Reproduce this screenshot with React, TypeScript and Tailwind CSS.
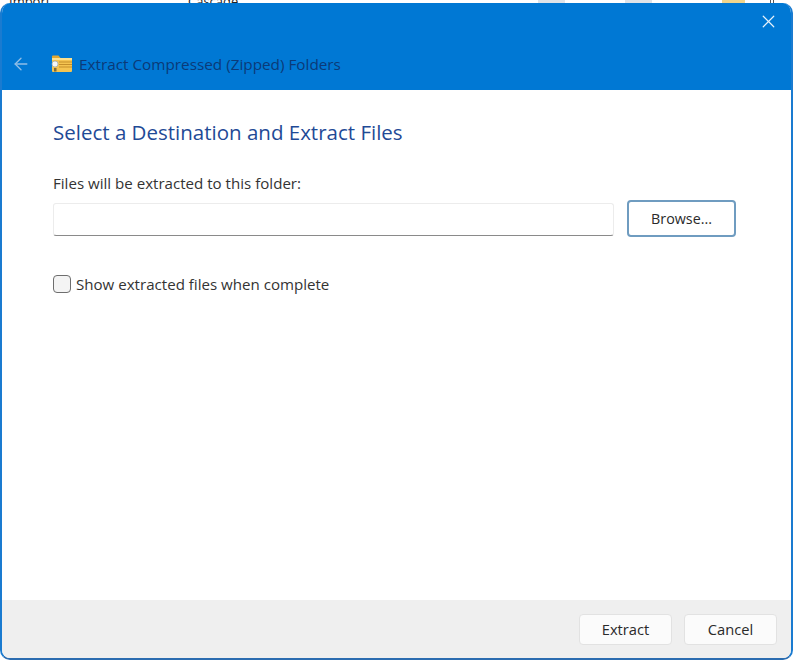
import { X, ArrowLeft } from 'lucide-react';

function ZipFolderIcon() {
  return (
    <svg width="22" height="20" viewBox="0 0 22 20" className="shrink-0">
      <path d="M1 2.5 Q1 1.5 2 1.5 H7.5 L9.5 4 H1 Z" fill="#e3a72f" />
      <rect x="1" y="4" width="20" height="14" rx="1" fill="#f5c451" />
      <rect x="1" y="4" width="20" height="2" fill="#fbe08f" />
      <path d="M8 8 H21 M8 10.5 H21 M8 13 H21" stroke="#c58f2a" strokeWidth="1" />
      <circle cx="4" cy="10" r="3" fill="#f4f6f8" stroke="#9aa3ab" strokeWidth="0.7" />
      <rect x="3" y="14" width="2.5" height="3.5" fill="#7d6a3a" />
    </svg>
  );
}

function FooterButton({ label }: { label: string }) {
  return (
    <button className="h-[31px] w-[93px] rounded-[4px] border border-[#e2e2e2] bg-[#fbfbfb] text-[14.7px] text-[#2a2a2a]">
      {label}
    </button>
  );
}

export default function App() {
  return (
    <div className="h-[661px] w-[794px] overflow-hidden bg-white font-['Open_Sans',sans-serif]">
      {/* window behind the dialog, only its bottom edge shows */}
      <div className="flex h-[3px] items-end overflow-hidden bg-white">
        <span className="ml-[9px] w-[179px] shrink-0 text-[13px] leading-[3px] text-[#222]">Import</span>
        <span className="w-[350px] shrink-0 text-[13px] leading-[3px] text-[#222]">Cascade</span>
        <div className="h-[3px] w-[27px] shrink-0 bg-[#dfe3e8]" />
        <div className="ml-[60px] h-[3px] w-[27px] shrink-0 bg-[#dfe3e8]" />
        <div className="ml-[70px] h-[3px] w-[23px] shrink-0 bg-[#f0d58c]" />
        <div className="ml-[25px] h-[3px] w-[1px] shrink-0 bg-[#555]" />
        <div className="ml-[2px] h-[3px] w-[1px] shrink-0 bg-[#555]" />
      </div>

      <div className="flex h-[657px] w-[793px] flex-col overflow-hidden rounded-[10px] border-x-2 border-b-2 border-x-[#1a7bd0] border-b-[#2b6cb0] bg-white">
        <div className="flex h-[87px] shrink-0 flex-col bg-[#0078d4] pr-[12px]">
          <div className="flex h-[50px] items-start justify-end pt-[8px]">
            <X className="text-[#e6f2fb]" size={21} strokeWidth={1.4} />
          </div>
          <div className="flex items-center pl-[9px]">
            <ArrowLeft className="text-[#8fbde6]" size={20} strokeWidth={1.6} />
            <div className="ml-[20px]">
              <ZipFolderIcon />
            </div>
            <span className="ml-[6px] text-[15.3px] text-[#0b3a78]">Extract Compressed (Zipped) Folders</span>
          </div>
        </div>

        <div className="flex flex-1 flex-col pl-[51px] pr-[55px]">
          <h1 className="mt-[27px] text-[20.5px] leading-[30px] text-[#1f4a96]">Select a Destination and Extract Files</h1>
          <label className="mt-[26px] text-[15.1px] leading-[20px] text-[#333]">Files will be extracted to this folder:</label>
          <div className="mt-[7px] flex items-center justify-between">
            <input className="mt-[2px] h-[33px] w-[561px] rounded-[3px] border border-[#ececec] border-b-[#8a8a8a] bg-white" />
            <button className="h-[37px] w-[109px] rounded-[4px] border-2 border-[#6f9cc0] bg-white text-[14.3px] text-[#2a2a2a]">
              Browse...
            </button>
          </div>
          <label className="mt-[36px] flex items-center gap-[5px] text-[15.1px] text-[#333]">
            <span className="h-[18px] w-[18px] rounded-[4px] border border-[#6e6e6e] bg-[#f4f4f4]" />
            Show extracted files when complete
          </label>
        </div>

        <div className="flex h-[58px] shrink-0 items-start justify-end gap-[12px] bg-[#efefef] pr-[14px] pt-[14px]">
          <FooterButton label="Extract" />
          <FooterButton label="Cancel" />
        </div>
      </div>
    </div>
  );
}
